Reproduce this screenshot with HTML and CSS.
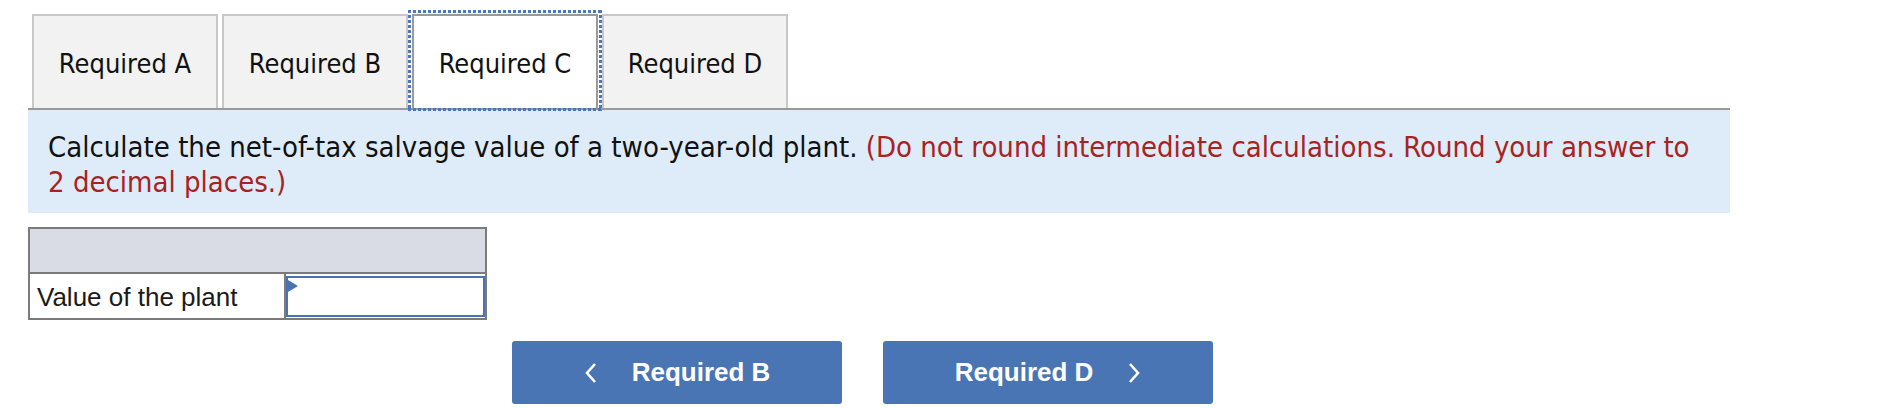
FILE: index.html
```html
<!DOCTYPE html>
<html>
<head>
<meta charset="utf-8">
<link rel="stylesheet" href="styles.css">
</head>
<body>
<div class="page">
  <div class="tabs">
    <div class="tab">Required A</div>
    <div class="tab">Required B</div>
    <div class="tab active">Required C</div>
    <div class="tab">Required D</div>
  </div>
  <div class="panel">
    <p class="question">Calculate the net-of-tax salvage value of a two-year-old plant. <span class="hint">(Do not round intermediate calculations. Round your answer to 2 decimal places.)</span></p>
  </div>
  <div class="answer">
    <div class="answer-head"></div>
    <div class="answer-row">
      <div class="label">Value of the plant</div>
      <div class="cell"><div class="input"><span class="flag"></span></div></div>
    </div>
  </div>
  <div class="nav">
    <button class="btn"><svg class="chev" width="14" height="22" viewBox="0 0 14 22"><path d="M11 2 L3 11 L11 20" fill="none" stroke="#fff" stroke-width="2.6"/></svg><span>Required B</span></button>
    <button class="btn"><span>Required D</span><svg class="chev" width="14" height="22" viewBox="0 0 14 22"><path d="M3 2 L11 11 L3 20" fill="none" stroke="#fff" stroke-width="2.6"/></svg></button>
  </div>
</div>
</body>
</html>
```

FILE: styles.css
```css
html, body { margin: 0; padding: 0; background: #fff; }
.page { padding: 14px 0 0 28px; width: 1702px; }
.tabs {
  display: flex;
  gap: 4px;
  padding-left: 4px;
  border-bottom: 2px solid #9a9a9a;
  height: 94px;
}
.tab {
  position: relative;
  width: 186px;
  box-sizing: border-box;
  height: 94px;
  background: #f2f2f2;
  border: 2px solid #c8c8c8;
  border-bottom: none;
  display: flex;
  align-items: center;
  justify-content: center;
  padding-top: 2px;
  font-family: "DejaVu Sans Condensed", "DejaVu Sans", sans-serif;
  font-stretch: condensed;
  font-size: 27px;
  color: #111;
}
.tab.active {
  background: #fff;
  border-color: #9a9a9a;
}
.tab.active::after {
  content: "";
  position: absolute;
  top: -6px;
  left: -6px;
  right: -6px;
  bottom: -3px;
  pointer-events: none;
  background:
    repeating-linear-gradient(90deg, #4a76c4 0 3px, transparent 3px 5px) left top / 100% 3px no-repeat,
    repeating-linear-gradient(90deg, #4a76c4 0 3px, transparent 3px 5px) left bottom / 100% 3px no-repeat,
    repeating-linear-gradient(180deg, #4a76c4 0 3px, transparent 3px 5px) left top / 3px 100% no-repeat,
    repeating-linear-gradient(180deg, #4a76c4 0 3px, transparent 3px 5px) right top / 3px 100% no-repeat;
}
.panel {
  background: #deebf8;
  padding: 20px 20px 13px 20px;
}
.question {
  margin: 0;
  font-family: "DejaVu Sans Condensed", "DejaVu Sans", sans-serif;
  font-stretch: condensed;
  font-size: 29px;
  line-height: 35px;
  color: #111;
}
.hint { color: #a8231f; }
.answer {
  margin-top: 14px;
  width: 459px;
  box-sizing: border-box;
  border: 2px solid #7b7b7b;
}
.answer-head {
  height: 43px;
  background: #d9dce5;
  border-bottom: 2px solid #7b7b7b;
}
.answer-row {
  display: grid;
  grid-template-columns: 256px 199px;
  height: 44px;
}
.label {
  border-right: 2px solid #7b7b7b;
  font-family: "Liberation Sans", Arial, sans-serif;
  font-size: 26px;
  color: #1a1a1a;
  display: flex;
  align-items: center;
  padding-left: 7px;
  padding-top: 2px;
}
.cell { padding: 2px 0 0 0; }
.input {
  position: relative;
  box-sizing: border-box;
  height: 41px;
  border: 2px solid #4a72b4;
  background: #fff;
}
.flag {
  position: absolute;
  left: 0;
  top: 2px;
  width: 0;
  height: 0;
  border-top: 6px solid transparent;
  border-bottom: 6px solid transparent;
  border-left: 10px solid #4a72b4;
}
.nav {
  display: flex;
  gap: 41px;
  margin-top: 21px;
  padding-left: 484px;
}
.btn {
  width: 330px;
  height: 63px;
  background: #4a75b5;
  border: none;
  border-radius: 3px;
  color: #fff;
  font-family: "Liberation Sans", Arial, sans-serif;
  font-weight: bold;
  font-size: 26px;
  display: flex;
  align-items: center;
  justify-content: center;
  gap: 34px;
  padding: 0;
}
.chev { display: block; }
```
